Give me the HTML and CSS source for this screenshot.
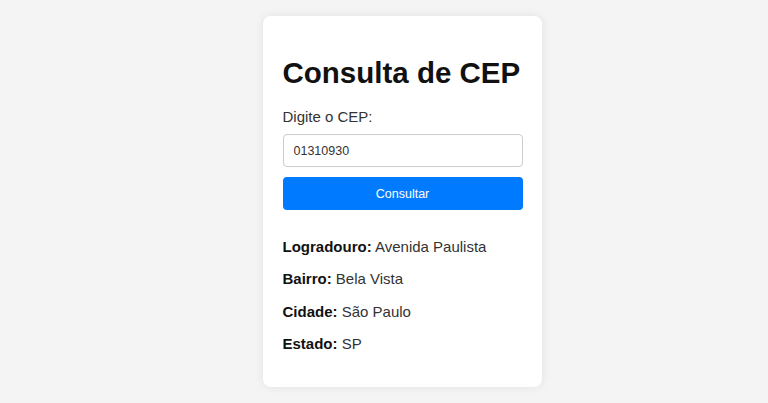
FILE: index.html
```html
<!DOCTYPE html>
<html lang="pt-BR">

<head>
    <meta charset="UTF-8">
    <meta name="viewport" content="width=device-width, initial-scale=1.0">
    <title>Consulta de CEP</title>
    <link rel="stylesheet" href="styles.css">
</head>

<body>
    <div class="container">
        <h1>Consulta de CEP</h1>

        <label for="cep">Digite o CEP:</label>
        <input type="text" id="cep" value="01310930">
        <button id="consultar-btn">Consultar</button>

        <div class="resultado">
            <p><strong>Logradouro:</strong> Avenida Paulista</p>
            <p><strong>Bairro:</strong> Bela Vista</p>
            <p><strong>Cidade:</strong> São Paulo</p>
            <p><strong>Estado:</strong> SP</p>
        </div>
    </div>
</body>

</html>
```

FILE: styles.css
```css
body {
    margin: 0;
    padding: 16px 0 16px 36px;
    font-family: 'Liberation Sans', Arial, sans-serif;
    background-color: #f4f4f4;
    display: flex;
    justify-content: center;
}

.container {
    background-color: #ffffff;
    width: 240px;
    padding: 20px 19px 19px 20px;
    border-radius: 8px;
    box-shadow: 0 0 10px rgba(0, 0, 0, 0.08);
}

h1 {
    font-size: 29.5px;
    line-height: 34px;
    white-space: nowrap;
    margin: 20px 0 18px;
    color: #111;
}

label {
    display: block;
    font-size: 15px;
    line-height: 18px;
    color: #333;
    margin-bottom: 8px;
}

input {
    display: block;
    width: 100%;
    box-sizing: border-box;
    height: 33px;
    padding: 8px 10px;
    font-family: inherit;
    font-size: 12.5px;
    color: #333;
    border: 1px solid #ccc;
    border-radius: 4px;
    margin-bottom: 10px;
}

button {
    display: block;
    width: 100%;
    height: 33px;
    background-color: #007bff;
    color: #ffffff;
    border: none;
    border-radius: 4px;
    font-family: inherit;
    font-size: 12.5px;
    cursor: pointer;
}

button:hover {
    background-color: #0069d9;
}

.resultado {
    margin-top: 28px;
}

.resultado p {
    margin: 14px 0;
    font-size: 15px;
    line-height: 18.4px;
    color: #333;
}

.resultado strong {
    color: #111;
}
```
